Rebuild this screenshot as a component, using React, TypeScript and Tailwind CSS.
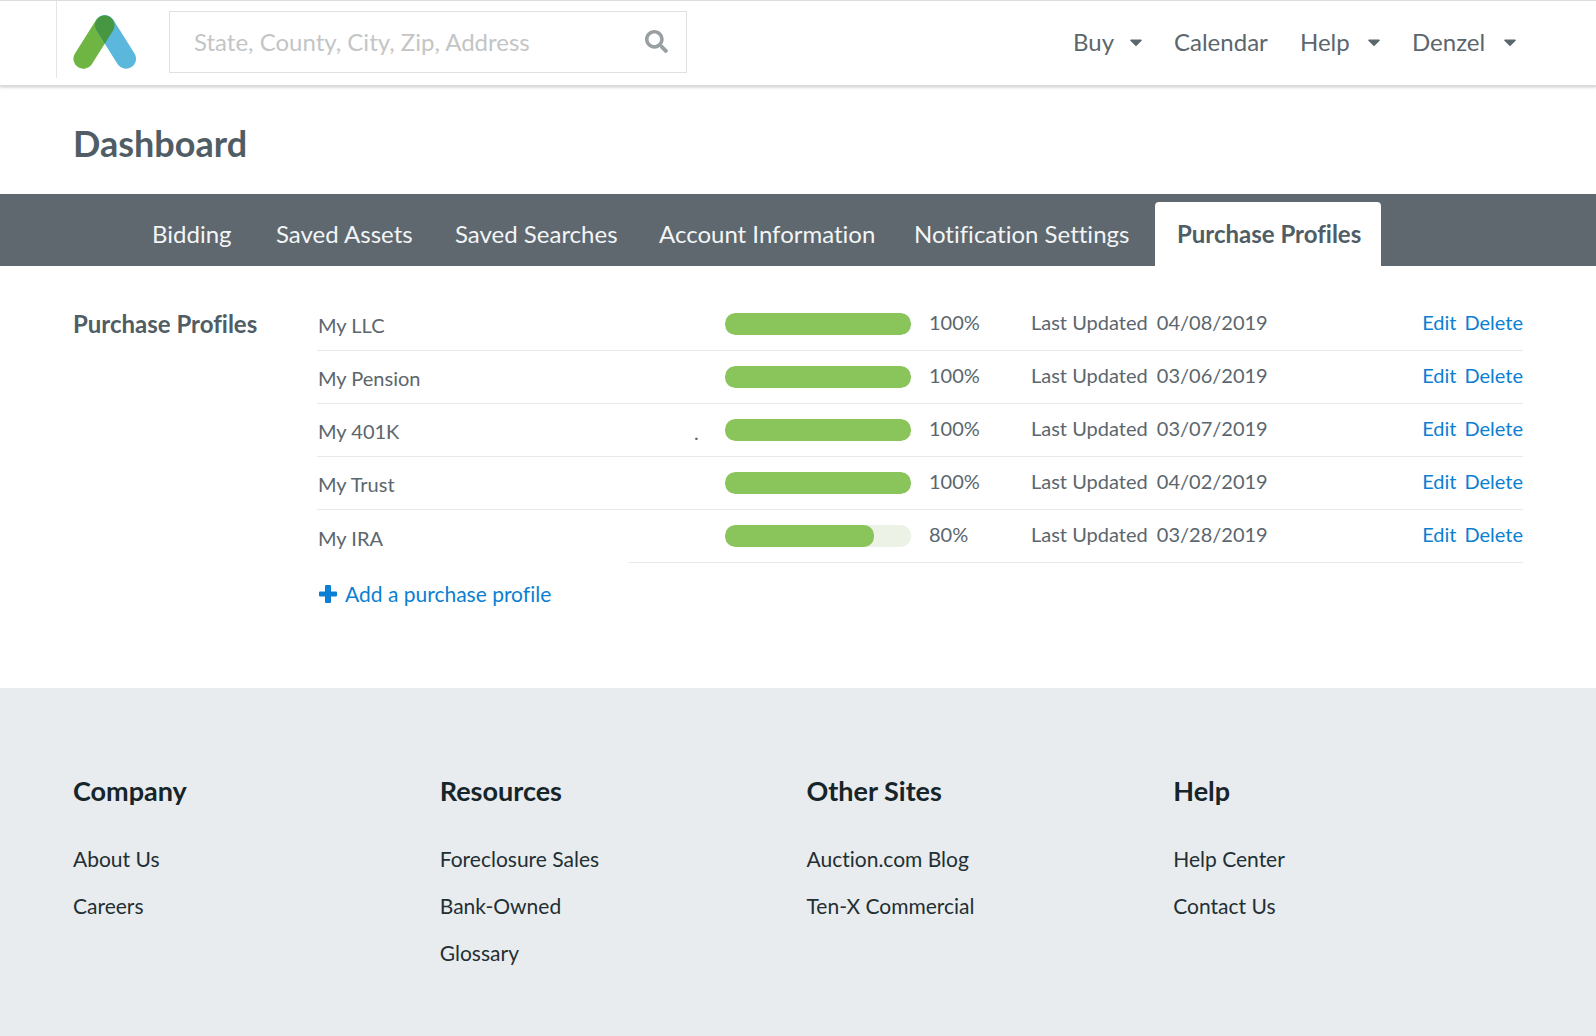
import { useState } from 'react';
import { FaCaretDown, FaSearch } from 'react-icons/fa';

const menu = [
  { label: 'Buy', dropdown: true, width: 'w-[101px]' },
  { label: 'Calendar', dropdown: false, width: 'w-[126px]' },
  { label: 'Help', dropdown: true, width: 'w-[112px]' },
  { label: 'Denzel', dropdown: true, width: 'w-[136px]' },
];

const tabs = [
  { label: 'Bidding', width: 'w-[124px]' },
  { label: 'Saved Assets', width: 'w-[179px]' },
  { label: 'Saved Searches', width: 'w-[204px]' },
  { label: 'Account Information', width: 'w-[255px]' },
  { label: 'Notification Settings', width: 'w-[263px]' },
  { label: 'Purchase Profiles', width: 'w-[226px]' },
];

const profiles = [
  { name: 'My LLC', note: '', progress: 100, updated: '04/08/2019' },
  { name: 'My Pension', note: '', progress: 100, updated: '03/06/2019' },
  { name: 'My 401K', note: '.', progress: 100, updated: '03/07/2019' },
  { name: 'My Trust', note: '', progress: 100, updated: '04/02/2019' },
  { name: 'My IRA', note: '', progress: 80, updated: '03/28/2019' },
];

const footerColumns = [
  { title: 'Company', links: ['About Us', 'Careers'] },
  { title: 'Resources', links: ['Foreclosure Sales', 'Bank-Owned', 'Glossary'] },
  { title: 'Other Sites', links: ['Auction.com Blog', 'Ten-X Commercial'] },
  { title: 'Help', links: ['Help Center', 'Contact Us'] },
];

function Logo() {
  return (
    <svg width="64" height="56" viewBox="0 0 64 56" aria-hidden="true">
      <defs>
        <clipPath id="left-leg">
          <path d="M23.5 5.3A10 10 0 0 1 40.5 15.7L18.5 50.7A10 10 0 0 1 1.5 40.3Z" />
        </clipPath>
      </defs>
      <path
        d="M23.5 5.3A10 10 0 0 1 40.5 15.7L18.5 50.7A10 10 0 0 1 1.5 40.3Z"
        fill="#6fb544"
      />
      <path
        d="M23 15.7A10 10 0 0 1 40 5.3L62 40.3A10 10 0 0 1 45 50.7Z"
        fill="#5bb8dc"
      />
      <path
        d="M23 15.7A10 10 0 0 1 40 5.3L62 40.3A10 10 0 0 1 45 50.7Z"
        fill="#469642"
        clipPath="url(#left-leg)"
      />
    </svg>
  );
}

function PlusIcon() {
  return (
    <svg width="18" height="18" viewBox="0 0 18 18" fill="currentColor" aria-hidden="true">
      <path d="M7 0h4a1 1 0 0 1 1 1v5.5h5a1 1 0 0 1 1 1v3a1 1 0 0 1-1 1h-5V17a1 1 0 0 1-1 1H7a1 1 0 0 1-1-1v-5.5H1a1 1 0 0 1-1-1v-3a1 1 0 0 1 1-1h5V1a1 1 0 0 1 1-1z" />
    </svg>
  );
}

function Header() {
  const [query, setQuery] = useState('');

  return (
    <header className="h-[87px] border-t border-b-2 border-t-[#dcdede] border-b-[#dcdede] shadow-sm">
      <div className="ml-14 flex h-[77px] items-center border-l border-[#e4e6e6] pl-4">
        <a href="#" aria-label="Home" className="pt-1">
          <Logo />
        </a>
        <form
          className="mt-1 ml-8 flex h-[62px] w-[518px] items-center border border-[#dfe1e1] pr-[18px] pl-6"
          onSubmit={(e) => e.preventDefault()}
        >
          <input
            type="text"
            aria-label="Search"
            value={query}
            onChange={(e) => setQuery(e.target.value)}
            placeholder="State, County, City, Zip, Address"
            className="h-full min-w-0 flex-1 text-2xl outline-none placeholder:text-[#c3c5c6]"
          />
          <button type="submit" aria-label="Search" className="text-[#98a0a3]">
            <FaSearch size={23} />
          </button>
        </form>
        <nav className="mt-1 ml-auto flex pr-12">
          {menu.map((item) => (
            <button key={item.label} type="button" className={`flex items-center text-2xl ${item.width}`}>
              {item.label}
              {item.dropdown && <FaCaretDown size={20} className="mr-7 ml-auto" />}
            </button>
          ))}
        </nav>
      </div>
    </header>
  );
}

function ProfileRow({ profile, last }: { profile: (typeof profiles)[number]; last: boolean }) {
  const border = 'border-b border-[#e8eaeb]';

  return (
    <tr className="h-[53px]">
      <th scope="row" className={`pt-0.5 pl-px text-left font-normal ${last ? '' : border}`}>
        {profile.name}
      </th>
      <td className={`pt-1 pl-[66px] ${border}`}>{profile.note}</td>
      <td className={`pr-[18px] ${border}`}>
        <div className="h-[22px] overflow-hidden rounded-[10px] bg-[#edf2e6]">
          <div
            className="h-full rounded-[10px] bg-[#8ac55c]"
            style={{ width: `${profile.progress}%` }}
          />
        </div>
      </td>
      <td className={`pb-1 ${border}`}>{profile.progress}%</td>
      <td className={`pb-1 ${border}`}>
        Last Updated <span className="ml-1">{profile.updated}</span>
      </td>
      <td className={`pb-1 text-right text-[#0b7fd3] ${border}`}>
        <a href="#" className="mr-2">Edit</a>
        <a href="#">Delete</a>
      </td>
    </tr>
  );
}

export default function App() {
  const [active, setActive] = useState('Purchase Profiles');

  return (
    <div className="min-h-screen bg-white font-['Lato','Liberation_Sans',sans-serif] text-[#5b666d] [font-variant-ligatures:none]">
      <Header />

      <h1 className="flex h-[107px] items-center pt-1 pl-[73px] text-4xl font-bold text-[#505d65]">
        Dashboard
      </h1>

      <nav className="flex h-[72px] items-end bg-[#5f676f] pl-[130px]">
        {tabs.map((tab) => (
          <button
            key={tab.label}
            type="button"
            onClick={() => setActive(tab.label)}
            className={`h-16 shrink-0 pl-[22px] text-left text-2xl whitespace-nowrap ${tab.width} ${
              active === tab.label
                ? 'rounded-t bg-white font-bold text-[#505d65]'
                : 'text-[#f2f5f6]'
            }`}
          >
            {tab.label}
          </button>
        ))}
      </nav>

      <main className="flex min-h-[422px] pt-8 pr-[73px] pl-[73px]">
        <h2 className="w-[244px] shrink-0 pt-2.5 text-2xl font-bold text-[#505d65]">Purchase Profiles</h2>
        <div className="flex-1 text-xl">
          <table className="w-full table-fixed border-separate border-spacing-0">
            <colgroup>
              <col />
              <col className="w-[97px]" />
              <col className="w-[204px]" />
              <col className="w-[102px]" />
              <col className="w-[300px]" />
              <col className="w-[192px]" />
            </colgroup>
            <tbody>
              {profiles.map((profile, i) => (
                <ProfileRow key={profile.name} profile={profile} last={i === profiles.length - 1} />
              ))}
            </tbody>
          </table>
          <button type="button" className="mt-4 flex items-center gap-2 pl-0.5 text-[21px] text-[#0b7fd3]">
            <PlusIcon />
            Add a purchase profile
          </button>
        </div>
      </main>

      <footer className="min-h-[348px] bg-[#e9ecee] pt-[83px] pr-14 pl-[73px] text-[#222f33]">
        <div className="grid grid-cols-4">
          {footerColumns.map((column) => (
            <div key={column.title}>
              <h3 className="text-[27px] leading-10 font-bold text-[#16252a]">{column.title}</h3>
              <ul className="mt-6 text-[21px] leading-[47px]">
                {column.links.map((link) => (
                  <li key={link}>
                    <a href="#">{link}</a>
                  </li>
                ))}
              </ul>
            </div>
          ))}
        </div>
      </footer>
    </div>
  );
}
